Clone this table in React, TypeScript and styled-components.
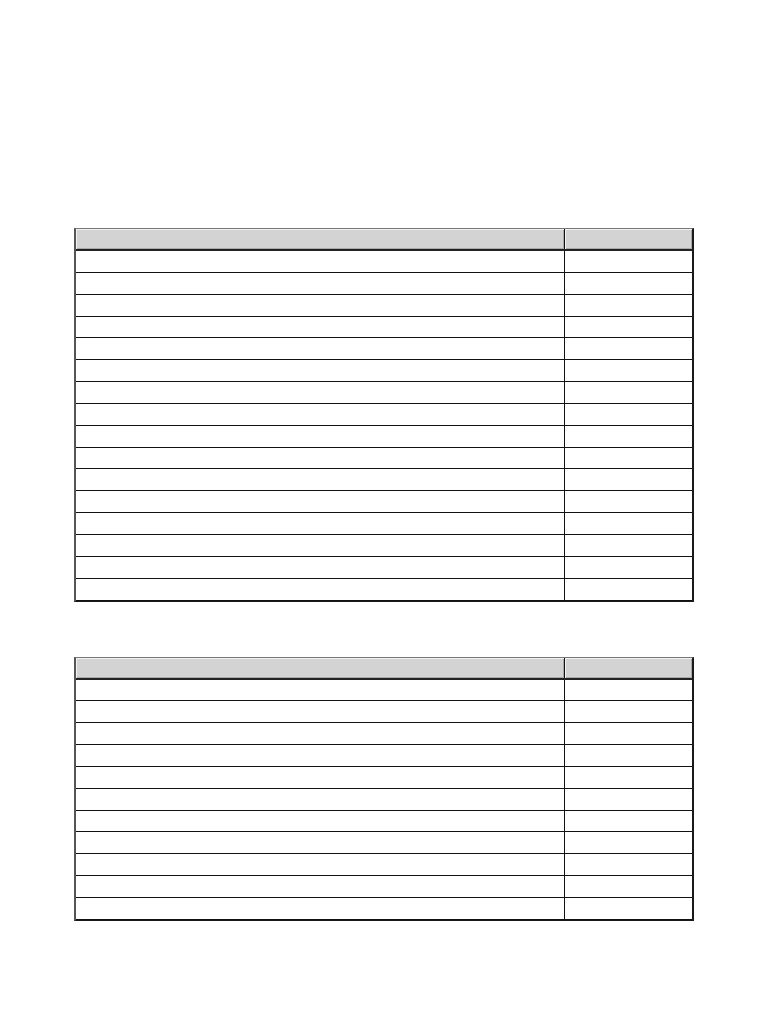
import React from "react";
import styled, { createGlobalStyle } from "styled-components";

const Global = createGlobalStyle`
  html, body { margin: 0; padding: 0; background: #ffffff; }
  body { font-family: "Liberation Sans", Arial, sans-serif; }
`;

const Page = styled.div`
  width: 768px;
  min-height: 1024px;
  box-sizing: border-box;
  padding: 228px 74px 0 74px;
  display: flex;
  flex-direction: column;
  gap: 55px;
`;

const Table = styled.div`
  width: 620px;
  box-sizing: border-box;
  border-top: 1px solid #777;
  border-left: 2px solid #555;
  border-right: 2px solid #1a1a1a;
  border-bottom: 1px solid #1a1a1a;
  display: flex;
  flex-direction: column;
`;

const Row = styled.div<{ $head?: boolean }>`
  display: grid;
  grid-template-columns: 1fr 127px;
  height: ${(p) => (p.$head ? "22px" : "21.85px")};
  box-sizing: border-box;
  border-bottom: ${(p) => (p.$head ? "2px solid #222" : "1px solid #111")};
`;

const Cell = styled.div<{ $head?: boolean; $last?: boolean }>`
  box-sizing: border-box;
  background: ${(p) => (p.$head ? "#d3d3d3" : "#ffffff")};
  border-right: ${(p) => (p.$last ? "none" : "1px solid #111")};
  ${(p) => (p.$head ? "box-shadow: inset 1px 1px 0 #f2f2f2, inset -1px -1px 0 #a8a8a8;" : "")}
`;

function DataTable({ rows }: { rows: number }) {
  return (
    <Table>
      <Row $head>
        <Cell $head />
        <Cell $head $last />
      </Row>
      {Array.from({ length: rows }).map((_, i) => (
        <Row key={i}>
          <Cell />
          <Cell $last />
        </Row>
      ))}
    </Table>
  );
}

export default function App() {
  return (
    <>
      <Global />
      <Page>
        <DataTable rows={16} />
        <DataTable rows={11} />
      </Page>
    </>
  );
}
